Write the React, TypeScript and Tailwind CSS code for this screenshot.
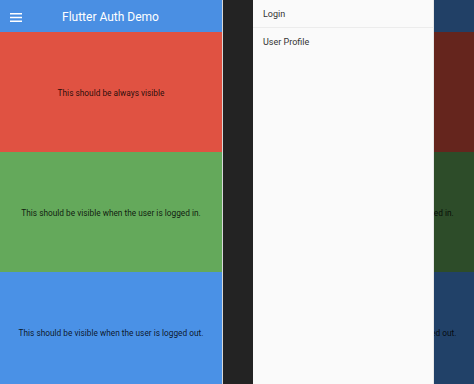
const sections = [
  { bg: 'bg-[#e05242]', text: 'This should be always visible' },
  { bg: 'bg-[#64a95b]', text: 'This should be visible when the user is logged in.' },
  { bg: 'bg-[#4a91e6]', text: 'This should be visible when the user is logged out.' },
];

const Screen = () => (
  <div className="flex flex-col h-full w-[222px]">
    <div className="h-8 bg-[#4a8fe3] flex items-center shrink-0 pt-[2px]">
      <svg width="12" height="9" viewBox="0 0 12 9" className="ml-[10px]">
        <rect x="0" y="0" width="12" height="1.5" fill="white" />
        <rect x="0" y="3.75" width="12" height="1.5" fill="white" />
        <rect x="0" y="7.5" width="12" height="1.5" fill="white" />
      </svg>
      <span className="ml-10 text-white text-[12px]">Flutter Auth Demo</span>
    </div>
    {sections.map((s, i) => (
      <div key={i} className={`${s.bg} h-[120px] shrink-0 flex items-center justify-center pt-[2px]`}>
        <span className="text-[8.3px] text-black/85 whitespace-nowrap">{s.text}</span>
      </div>
    ))}
  </div>
);

export default function App() {
  return (
    <div
      className="w-[474px] h-[384px] flex bg-[#232323] overflow-hidden"
      style={{ fontFamily: 'Roboto, "Noto Sans", sans-serif' }}
    >
      <div className="border-r border-[#d8d8d8] h-full overflow-hidden">
        <Screen />
      </div>
      <div className="w-[30px] shrink-0" />
      <div className="relative h-full w-[221px] overflow-hidden shrink-0">
        <Screen />
        <div className="absolute inset-0 bg-black/55" />
        <div className="absolute left-0 top-0 bottom-0 w-[181px] bg-[#fafafa] border-r border-[#e8e8e8]">
          <div className="h-[28px] flex items-center pt-[2px] pl-[10px] text-[9px] text-[#333] border-b border-[#ececec]">Login</div>
          <div className="h-[28px] flex items-center pt-[2px] pl-[10px] text-[9px] text-[#333]">User Profile</div>
        </div>
      </div>
    </div>
  );
}
